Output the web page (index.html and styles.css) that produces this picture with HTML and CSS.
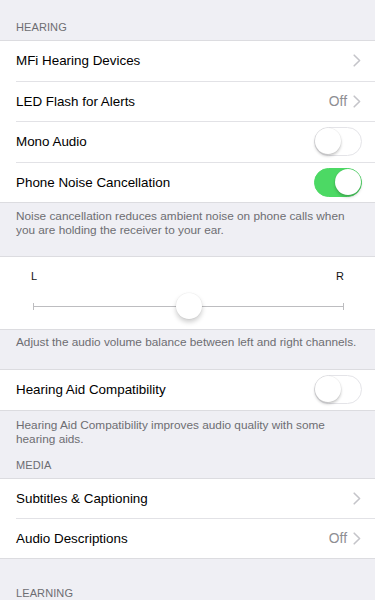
FILE: index.html
```html
<!DOCTYPE html>
<html>
<head>
<meta charset="utf-8">
<link rel="stylesheet" href="styles.css">
</head>
<body>
<div class="page">
  <div class="section-header first">HEARING</div>
  <div class="group">
    <div class="row">
      <div class="row-inner tall">
        <span class="label">MFi Hearing Devices</span>
        <span class="accessory">
          <svg class="chevron" width="8" height="13" viewBox="0 0 8 13"><polyline points="1.2,1.2 6.6,6.5 1.2,11.8" fill="none" stroke="#c4c4c9" stroke-width="1.6" stroke-linecap="round" stroke-linejoin="round"/></svg>
        </span>
      </div>
    </div>
    <div class="row">
      <div class="row-inner tall">
        <span class="label">LED Flash for Alerts</span>
        <span class="accessory">
          <span class="value">Off</span>
          <svg class="chevron" width="8" height="13" viewBox="0 0 8 13"><polyline points="1.2,1.2 6.6,6.5 1.2,11.8" fill="none" stroke="#c4c4c9" stroke-width="1.6" stroke-linecap="round" stroke-linejoin="round"/></svg>
        </span>
      </div>
    </div>
    <div class="row">
      <div class="row-inner tall">
        <span class="label">Mono Audio</span>
        <span class="switch"><span class="knob"></span></span>
      </div>
    </div>
    <div class="row">
      <div class="row-inner last">
        <span class="label">Phone Noise Cancellation</span>
        <span class="switch on"><span class="knob"></span></span>
      </div>
    </div>
  </div>
  <div class="footer f1">Noise cancellation reduces ambient noise on phone calls when you are holding the receiver to your ear.</div>

  <div class="group slider-group">
    <div class="lr">
      <span>L</span>
      <span>R</span>
    </div>
    <div class="slider">
      <div class="track"></div>
      <div class="thumb"></div>
    </div>
  </div>
  <div class="footer f2">Adjust the audio volume balance between left and right channels.</div>

  <div class="group">
    <div class="row">
      <div class="row-inner last">
        <span class="label">Hearing Aid Compatibility</span>
        <span class="switch"><span class="knob"></span></span>
      </div>
    </div>
  </div>
  <div class="footer f3">Hearing Aid Compatibility improves audio quality with some hearing aids.</div>
  <div class="section-header media">MEDIA</div>
  <div class="group">
    <div class="row">
      <div class="row-inner">
        <span class="label">Subtitles &amp; Captioning</span>
        <span class="accessory">
          <svg class="chevron" width="8" height="13" viewBox="0 0 8 13"><polyline points="1.2,1.2 6.6,6.5 1.2,11.8" fill="none" stroke="#c4c4c9" stroke-width="1.6" stroke-linecap="round" stroke-linejoin="round"/></svg>
        </span>
      </div>
    </div>
    <div class="row">
      <div class="row-inner last">
        <span class="label">Audio Descriptions</span>
        <span class="accessory">
          <span class="value">Off</span>
          <svg class="chevron" width="8" height="13" viewBox="0 0 8 13"><polyline points="1.2,1.2 6.6,6.5 1.2,11.8" fill="none" stroke="#c4c4c9" stroke-width="1.6" stroke-linecap="round" stroke-linejoin="round"/></svg>
        </span>
      </div>
    </div>
  </div>
  <div class="section-header learning">LEARNING</div>
</div>
</body>
</html>
```

FILE: styles.css
```css
* { box-sizing: border-box; }
html, body {
  margin: 0;
  padding: 0;
  background: #efeff4;
  font-family: "Liberation Sans", Arial, sans-serif;
  -webkit-font-smoothing: antialiased;
}
.page {
  width: 375px;
  height: 600px;
  overflow: hidden;
}
.section-header {
  padding: 0 16px 6px;
  font-size: 11px;
  line-height: 14px;
  color: #6d6d72;
  letter-spacing: 0.1px;
}
.section-header.first { padding-top: 20px; }
.section-header.media { padding-top: 12px; }
.section-header.learning { padding-top: 27px; }

.group {
  background: #fff;
  border-top: 1px solid #dcdce0;
  border-bottom: 1px solid #dcdce0;
}
.row {
  padding-left: 16px;
}
.row-inner {
  height: 40px;
  display: flex;
  align-items: center;
  justify-content: space-between;
  padding-right: 13px;
  border-bottom: 1px solid #e2e2e6;
}
.row-inner.tall { height: 40.5px; }
.row-inner.last { border-bottom: none; height: 39.5px; }
.label {
  font-size: 13.4px;
  color: #000;
}
.accessory {
  display: flex;
  align-items: center;
  gap: 6px;
}
.value {
  font-size: 13.8px;
  color: #8e8e93;
}
.chevron { display: block; margin-right: 1px; }

.switch {
  width: 48px;
  height: 29px;
  border-radius: 15px;
  background: #fff;
  border: 1.5px solid #e4e4e8;
  position: relative;
  flex: none;
}
.switch .knob {
  position: absolute;
  top: 0;
  left: 0;
  width: 26px;
  height: 26px;
  border-radius: 50%;
  background: #fff;
  box-shadow: 0 2px 3px rgba(0,0,0,0.22), 0 0 0 0.5px rgba(0,0,0,0.06);
}
.switch.on {
  background: #4cd964;
  border-color: #4cd964;
}
.switch.on .knob {
  left: auto;
  right: 0;
}

.footer {
  padding: 0 16px;
  font-size: 11.8px;
  line-height: 14px;
  color: #6d6d72;
}
.f1 { padding-top: 6px; padding-bottom: 19px; }
.f2 { padding-top: 5px; padding-bottom: 20px; }
.f3 { padding-top: 7px; }

.slider-group {
  padding: 11px 30px 9px 31px;
}
.lr {
  display: flex;
  justify-content: space-between;
  font-size: 11px;
  line-height: 16px;
  color: #111;
  padding-right: 1px;
}
.slider {
  position: relative;
  height: 28px;
  margin-top: 8px;
  display: flex;
  align-items: center;
}
.track {
  flex: 1;
  height: 1px;
  background: #bdbdc0;
  position: relative;
  margin: 0 1px 0 2px;
}
.track::before, .track::after {
  content: "";
  position: absolute;
  top: -3px;
  width: 1px;
  height: 7px;
  background: #bdbdc0;
}
.track::before { left: 0; }
.track::after { right: 0; }
.thumb {
  position: absolute;
  left: 50%;
  top: 1px;
  width: 26px;
  height: 26px;
  margin-left: -12px;
  border-radius: 50%;
  background: #fff;
  box-shadow: 0 3px 5px rgba(0,0,0,0.2), 0 0 0 0.5px rgba(0,0,0,0.05);
}
```
